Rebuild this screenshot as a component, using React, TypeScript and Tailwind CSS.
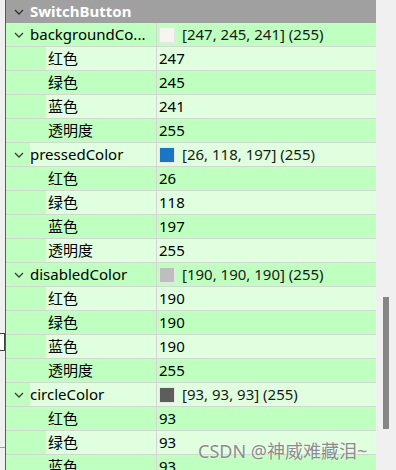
import React from "react";

type Prop = {
  name: string;
  rgb: [number, number, number];
};

const props: Prop[] = [
  { name: "backgroundCo...", rgb: [247, 245, 241] },
  { name: "pressedColor", rgb: [26, 118, 197] },
  { name: "disabledColor", rgb: [190, 190, 190] },
  { name: "circleColor", rgb: [93, 93, 93] },
];

const BRIGHT = "bg-[#bfffbf]";
const LIGHT = "bg-[#dfffdf]";

const Chevron = ({ color = "#3c3c3c" }: { color?: string }) => (
  <svg width="10" height="6" viewBox="0 0 10 6" className="shrink-0">
    <polyline points="1,1 5,5 9,1" fill="none" stroke={color} strokeWidth="1.3" />
  </svg>
);

const ParentRow = ({ p, bright }: { p: Prop; bright: boolean }) => (
  <div className="flex h-[24px] shrink-0 border-b border-[#d4d4d4]">
    <div className={`flex w-[150px] shrink-0 items-center ${BRIGHT}`}>
      <div className="flex w-[24px] justify-center pl-[2px]">
        <Chevron />
      </div>
      <div className={`flex h-full flex-1 items-center ${bright ? BRIGHT : LIGHT}`}>
        {p.name}
      </div>
    </div>
    <div className="w-px bg-[#d4d4d4]" />
    <div className={`flex flex-1 items-center gap-[7px] pl-[2px] ${bright ? BRIGHT : LIGHT}`}>
      <span
        className="h-[16px] w-[16px] border border-[#e6e6e6]"
        style={{ backgroundColor: `rgb(${p.rgb.join(",")})` }}
      />
      <span className="text-[#1a1a1a]">
        [{p.rgb.join(", ")}] (255)
      </span>
    </div>
  </div>
);

const ChildRow = ({ label, value, bright }: { label: string; value: number; bright: boolean }) => (
  <div className="flex h-[24px] shrink-0 border-b border-[#d4d4d4]">
    <div className={`flex w-[150px] shrink-0 ${BRIGHT}`}>
      <div className="w-[40px]" />
      <div className={`flex flex-1 items-center pl-[2px] ${bright ? BRIGHT : LIGHT}`}>{label}</div>
    </div>
    <div className="w-px bg-[#d4d4d4]" />
    <div className={`flex flex-1 items-center pl-[2px] ${bright ? BRIGHT : LIGHT}`}>{value}</div>
  </div>
);

export default function App() {
  let idx = 0;
  const rows: React.ReactNode[] = [];
  props.forEach((p) => {
    rows.push(<ParentRow key={p.name} p={p} bright={idx % 2 === 0} />);
    idx++;
    const kids: [string, number][] = [
      ["红色", p.rgb[0]],
      ["绿色", p.rgb[1]],
      ["蓝色", p.rgb[2]],
      ["透明度", 255],
    ];
    kids.forEach(([l, v]) => {
      rows.push(<ChildRow key={p.name + l} label={l} value={v} bright={idx % 2 === 0} />);
      idx++;
    });
  });

  return (
    <div
      className="relative flex h-[470px] w-[396px] overflow-hidden bg-[#f0f0f0] text-[15px] text-black"
      style={{ fontFamily: '"Noto Sans", "Noto Sans CJK SC", sans-serif' }}
    >
      {/* left edge of neighbouring widget */}
      <div className="flex w-[5px] shrink-0 flex-col">
        <div className="h-[333px] shrink-0" />
        <div className="h-[18px] shrink-0 border-y border-r border-[#404040] bg-white" />
        <div className="h-[96px] shrink-0" />
        <div className="h-[1px] shrink-0 bg-[#a0a0a0]" />
      </div>
      <div className="w-px shrink-0 bg-[#5a5a5a]" />

      <div className="flex w-[370px] shrink-0 flex-col overflow-hidden">
        <div className="flex h-[23px] shrink-0 items-center bg-[#a0a0a0]">
          <div className="flex w-[24px] justify-center pl-[2px]">
            <Chevron color="#303030" />
          </div>
          <span className="font-bold text-white">SwitchButton</span>
        </div>
        {rows}
      </div>

      <div className="flex w-[20px] shrink-0 flex-col bg-[#f0f0f0]">
        <div className="ml-[7px] mt-[297px] h-[132px] w-[6px] shrink-0 bg-[#868686]" />
      </div>

      <div className="absolute left-[198px] top-[438px] text-[18px] text-[#8c8c8c] [text-shadow:0_0_2px_#ffffff]">
        CSDN @神威难藏泪~
      </div>
    </div>
  );
}
